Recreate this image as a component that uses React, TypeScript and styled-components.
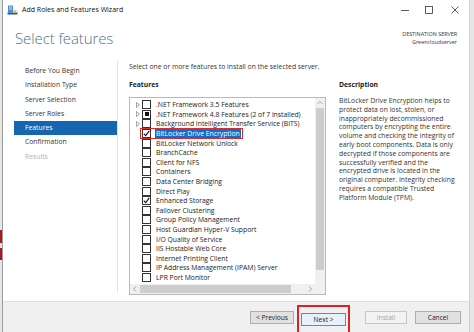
import React from "react";
import styled, { createGlobalStyle } from "styled-components";

const GlobalStyle = createGlobalStyle`
  html, body {
    margin: 0;
    padding: 0;
    background: #ffffff;
  }
  body {
    font-family: "Open Sans", "Noto Sans", "Liberation Sans", sans-serif;
    color: #1e1e1e;
  }
`;

const Page = styled.div`
  position: relative;
  width: 474px;
  height: 332px;
  overflow: hidden;
  background: #e6e6e6;
`;

const Window = styled.div`
  display: flex;
  flex-direction: column;
  margin-left: 2px;
  width: 468px;
  height: 332px;
  background: #ffffff;
  border-left: 1px solid #9c9c9c;
  border-right: 1px solid #d0d0d0;
  box-sizing: border-box;
`;

const TitleBar = styled.div`
  display: flex;
  align-items: center;
  height: 19px;
  padding-left: 4px;
  font-size: 7px;
  color: #111;
`;

const TitleText = styled.span`
  margin-left: 4px;
  flex: 1;
`;

const Controls = styled.div`
  display: flex;
  align-items: center;
  height: 100%;
`;

const ControlButton = styled.div<{ $w?: number }>`
  display: flex;
  align-items: center;
  justify-content: center;
  width: ${(p) => p.$w ?? 24}px;
  height: 100%;
`;

const Header = styled.div`
  display: flex;
  justify-content: space-between;
  height: 41px;
  padding: 0 12px 0 12px;
`;

const PageTitle = styled.h1`
  margin: 9px 0 0 0;
  font-size: 15px;
  font-weight: 300;
  color: #54718a;
  letter-spacing: -0.1px;
`;

const ServerInfo = styled.div`
  margin-top: 11px;
  text-align: right;
  font-size: 5.4px;
  line-height: 8px;
  color: #333;
`;

const Body = styled.div`
  display: flex;
  flex: 1;
  min-height: 0;
`;

const Nav = styled.div`
  display: flex;
  flex-direction: column;
  width: 115px;
  margin-bottom: 8px;
  padding-top: 4px;
  border-right: 1px solid #e4e4e4;
  box-sizing: border-box;
`;

const NavItem = styled.div<{ $active?: boolean; $disabled?: boolean }>`
  height: 14.3px;
  line-height: 14.3px;
  margin-left: 11px;
  padding-left: 11px;
  font-size: 6.8px;
  color: ${(p) => (p.$active ? "#ffffff" : p.$disabled ? "#b3b3b3" : "#333333")};
  background: ${(p) => (p.$active ? "#1565b0" : "transparent")};
`;

const Content = styled.div`
  display: flex;
  flex-direction: column;
  flex: 1;
  padding: 2px 0 6px 11px;
`;

const Intro = styled.div`
  font-size: 6.8px;
  line-height: 10px;
  color: #333;
`;

const Columns = styled.div`
  display: flex;
  flex: 1;
  margin-top: 8px;
  gap: 13px;
`;

const FeatureColumn = styled.div`
  display: flex;
  flex-direction: column;
  width: 197px;
`;

const SectionLabel = styled.div`
  font-size: 6.8px;
  font-weight: 700;
  line-height: 10px;
  margin-bottom: 7px;
  color: #222;
`;

const ListBox = styled.div`
  display: grid;
  grid-template-columns: 1fr 10px;
  grid-template-rows: 1fr 10px;
  flex: 1;
  border: 1px solid #b9b9b9;
  min-height: 0;
`;

const Items = styled.div`
  padding: 2px 0 0 3px;
  overflow: hidden;
`;

const Row = styled.div`
  display: flex;
  align-items: center;
  height: 9.6px;
  font-size: 6.8px;
  white-space: nowrap;
  color: #222;
`;

const Expander = styled.div`
  display: flex;
  align-items: center;
  justify-content: center;
  width: 9px;
`;

const Box = styled.div<{ $state?: "on" | "mixed" }>`
  position: relative;
  display: flex;
  align-items: center;
  justify-content: center;
  width: 7px;
  height: 7px;
  border: 1px solid #333;
  background: #fff;
  flex-shrink: 0;
  &::after {
    content: "";
    display: ${(p) => (p.$state === "mixed" ? "block" : "none")};
    width: 4px;
    height: 4px;
    background: #111;
  }
`;

const Label = styled.span<{ $selected?: boolean }>`
  margin-left: 4px;
  padding: 0 1px;
  line-height: 9px;
  color: ${(p) => (p.$selected ? "#ffffff" : "inherit")};
  background: ${(p) => (p.$selected ? "#0a6fd0" : "transparent")};
`;

const Callout = styled.div`
  display: flex;
  align-items: center;
  margin-left: -2px;
  padding: 0 1px;
  height: 9px;
  border: 1.5px solid #e02a2a;
`;

const VScroll = styled.div`
  display: flex;
  flex-direction: column;
  background: #f0f0f0;
`;

const ScrollArrow = styled.div`
  display: flex;
  align-items: center;
  justify-content: center;
  width: 10px;
  height: 10px;
  flex-shrink: 0;
`;

const VThumb = styled.div`
  flex: 1;
  margin: 0 1px 14px;
  background: #cdcdcd;
`;

const HScroll = styled.div`
  display: flex;
  background: #f0f0f0;
`;

const HThumb = styled.div`
  flex: 1;
  margin: 1px 14px 1px 0;
  background: #cdcdcd;
`;

const Corner = styled.div`
  background: #f0f0f0;
`;

const Description = styled.div`
  display: flex;
  flex-direction: column;
  flex: 1;
`;

const DescLine = styled.div`
  font-size: 6.8px;
  line-height: 8.8px;
  white-space: nowrap;
  color: #333;
`;

const Footer = styled.div`
  display: flex;
  align-items: center;
  justify-content: flex-end;
  height: 30px;
  padding-right: 8px;
  background: #f0f0f0;
  border-top: 1px solid #dfdfdf;
`;

const Button = styled.div<{ $disabled?: boolean; $default?: boolean; $width: number }>`
  display: flex;
  align-items: center;
  justify-content: center;
  width: ${(p) => p.$width}px;
  height: 13px;
  box-sizing: border-box;
  font-size: 6.6px;
  color: ${(p) => (p.$disabled ? "#a3a3a3" : "#222")};
  background: ${(p) => (p.$disabled ? "#f3f3f3" : p.$default ? "#e5f1fb" : "#e1e1e1")};
  border: 1px solid ${(p) => (p.$disabled ? "#c6c6c6" : p.$default ? "#4a90d6" : "#adadad")};
`;

const ButtonGap = styled.div<{ $w: number }>`
  width: ${(p) => p.$w}px;
`;

const NextFrame = styled.div`
  display: flex;
  align-items: center;
  justify-content: center;
  align-self: flex-end;
  height: 25px;
  padding: 0 2px;
  border: 2px solid #e01f26;
  border-bottom: none;
`;

const EdgeMark = styled.div`
  position: absolute;
  left: 0;
  width: 2px;
  background: #b0151d;
`;

const navItems = [
  "Before You Begin",
  "Installation Type",
  "Server Selection",
  "Server Roles",
  "Features",
  "Confirmation",
  "Results",
];

type Feature = {
  name: string;
  expandable?: boolean;
  state?: "on" | "mixed";
  callout?: boolean;
};

const features: Feature[] = [
  { name: ".NET Framework 3.5 Features", expandable: true },
  { name: ".NET Framework 4.8 Features (2 of 7 installed)", expandable: true, state: "mixed" },
  { name: "Background Intelligent Transfer Service (BITS)", expandable: true },
  { name: "BitLocker Drive Encryption", state: "on", callout: true },
  { name: "BitLocker Network Unlock" },
  { name: "BranchCache" },
  { name: "Client for NFS" },
  { name: "Containers" },
  { name: "Data Center Bridging" },
  { name: "Direct Play" },
  { name: "Enhanced Storage", state: "on" },
  { name: "Failover Clustering" },
  { name: "Group Policy Management" },
  { name: "Host Guardian Hyper-V Support" },
  { name: "I/O Quality of Service" },
  { name: "IIS Hostable Web Core" },
  { name: "Internet Printing Client" },
  { name: "IP Address Management (IPAM) Server" },
  { name: "LPR Port Monitor" },
];

const description = [
  "BitLocker Drive Encryption helps to",
  "protect data on lost, stolen, or",
  "inappropriately decommissioned",
  "computers by encrypting the entire",
  "volume and checking the integrity of",
  "early boot components. Data is only",
  "decrypted if those components are",
  "successfully verified and the",
  "encrypted drive is located in the",
  "original computer. Integrity checking",
  "requires a compatible Trusted",
  "Platform Module (TPM).",
];

const Check = () => (
  <svg width="7" height="7" viewBox="0 0 7 7" style={{ position: "absolute" }}>
    <path d="M0.8 3.6 L2.7 5.6 L6.3 0.8" fill="none" stroke="#111" strokeWidth="1.1" />
  </svg>
);

const Triangle = () => (
  <svg width="4" height="6" viewBox="0 0 4 6">
    <path d="M0.5 0.5 L3.5 3 L0.5 5.5 Z" fill="none" stroke="#8c8c8c" strokeWidth="0.8" />
  </svg>
);

const Arrow = ({ dir }: { dir: "up" | "down" | "left" | "right" }) => {
  const d = {
    up: "M1.5 5 L4 2.5 L6.5 5",
    down: "M1.5 3 L4 5.5 L6.5 3",
    left: "M5 1.5 L2.5 4 L5 6.5",
    right: "M3 1.5 L5.5 4 L3 6.5",
  }[dir];
  return (
    <svg width="8" height="8" viewBox="0 0 8 8">
      <path d={d} fill="none" stroke="#9a9a9a" strokeWidth="0.9" />
    </svg>
  );
};

const WizardIcon = () => (
  <svg width="11" height="10" viewBox="0 0 11 10">
    <rect x="1" y="0.5" width="5" height="7" fill="#4a8fd1" />
    <rect x="2" y="1.5" width="3" height="1" fill="#cfe3f6" />
    <rect x="2" y="3.5" width="3" height="1" fill="#cfe3f6" />
    <rect x="0.5" y="7.5" width="10" height="2" fill="#1d5f9e" />
    <rect x="6.5" y="5" width="3" height="2.5" fill="#f2c14e" />
  </svg>
);

const FeatureRow = ({ f }: { f: Feature }) => {
  const inner = (
    <>
      <Box $state={f.state}>{f.state === "on" && <Check />}</Box>
      <Label $selected={f.callout}>{f.name}</Label>
    </>
  );
  return (
    <Row>
      <Expander>{f.expandable && <Triangle />}</Expander>
      {f.callout ? <Callout>{inner}</Callout> : inner}
    </Row>
  );
};

export default function App() {
  return (
    <Page>
      <GlobalStyle />
      <EdgeMark style={{ top: 230, height: 13 }} />
      <EdgeMark style={{ top: 248, height: 12 }} />
      <Window>
        <TitleBar>
          <WizardIcon />
          <TitleText>Add Roles and Features Wizard</TitleText>
          <Controls>
            <ControlButton>
              <svg width="8" height="8" viewBox="0 0 8 8">
                <path d="M0 4.5 H8" stroke="#333" strokeWidth="0.8" />
              </svg>
            </ControlButton>
            <ControlButton>
              <svg width="8" height="8" viewBox="0 0 8 8">
                <rect x="0.5" y="0.5" width="7" height="7" fill="none" stroke="#333" strokeWidth="0.8" />
              </svg>
            </ControlButton>
            <ControlButton $w={28}>
              <svg width="8" height="8" viewBox="0 0 8 8">
                <path d="M0.5 0.5 L7.5 7.5 M7.5 0.5 L0.5 7.5" stroke="#333" strokeWidth="0.8" />
              </svg>
            </ControlButton>
          </Controls>
        </TitleBar>

        <Header>
          <PageTitle>Select features</PageTitle>
          <ServerInfo>
            DESTINATION SERVER
            <br />
            Greencloudserver
          </ServerInfo>
        </Header>

        <Body>
          <Nav>
            {navItems.map((n) => (
              <NavItem key={n} $active={n === "Features"} $disabled={n === "Results"}>
                {n}
              </NavItem>
            ))}
          </Nav>

          <Content>
            <Intro>Select one or more features to install on the selected server.</Intro>
            <Columns>
              <FeatureColumn>
                <SectionLabel>Features</SectionLabel>
                <ListBox>
                  <Items>
                    {features.map((f) => (
                      <FeatureRow key={f.name} f={f} />
                    ))}
                  </Items>
                  <VScroll>
                    <ScrollArrow>
                      <Arrow dir="up" />
                    </ScrollArrow>
                    <VThumb />
                  </VScroll>
                  <HScroll>
                    <ScrollArrow>
                      <Arrow dir="left" />
                    </ScrollArrow>
                    <HThumb />
                    <ScrollArrow>
                      <Arrow dir="right" />
                    </ScrollArrow>
                  </HScroll>
                  <Corner />
                </ListBox>
              </FeatureColumn>

              <Description>
                <SectionLabel>Description</SectionLabel>
                {description.map((line) => (
                  <DescLine key={line}>{line}</DescLine>
                ))}
              </Description>
            </Columns>
          </Content>
        </Body>

        <Footer>
          <Button $width={44}>&lt; Previous</Button>
          <ButtonGap $w={3} />
          <NextFrame>
            <Button $width={45} $default>
              Next &gt;
            </Button>
          </NextFrame>
          <ButtonGap $w={15} />
          <Button $width={42} $disabled>
            Install
          </Button>
          <ButtonGap $w={8} />
          <Button $width={46}>Cancel</Button>
        </Footer>
      </Window>
    </Page>
  );
}
